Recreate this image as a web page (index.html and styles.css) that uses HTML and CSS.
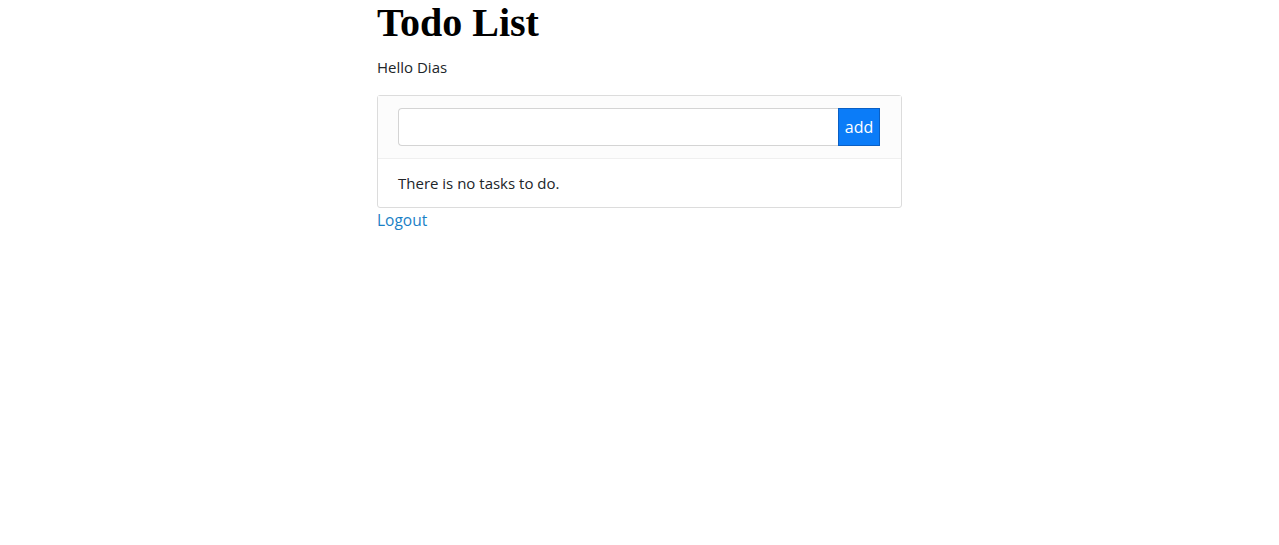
FILE: index.html
```html
<!DOCTYPE html>
<html>
<head>
    <title>Todo List</title>
    <link rel="stylesheet" href="styles.css">
</head>
<body>
    <div class="container">
        <h1>Todo List</h1>
        <p class="greeting">Hello Dias</p>
        <div class="card">
            <div class="card-header">
                <form class="add-form" onsubmit="return false">
                    <input type="text" class="task-input">
                    <button type="submit" class="add-btn">add</button>
                </form>
            </div>
            <div class="card-body">
                There is no tasks to do.
            </div>
        </div>
        <a href="#" class="logout">Logout</a>
    </div>
</body>
</html>
```

FILE: styles.css
```css
body {
    margin: 0;
    font-family: 'Open Sans', 'Noto Sans', sans-serif;
    font-size: 15px;
    line-height: 24px;
    color: #212529;
    background-color: #fff;
}

.container {
    width: 525px;
    margin: 0 auto;
}

h1 {
    margin: 0 0 9px;
    font-family: 'Liberation Serif', serif;
    font-size: 40px;
    line-height: 46px;
    font-weight: bold;
    color: #000;
}

.greeting {
    margin: 0 0 16px;
}

.card {
    border: 1px solid #dcdcdc;
    border-radius: 3px;
}

.card-header {
    padding: 12px 21px 12px 20px;
    background-color: #fcfcfc;
    border-bottom: 1px solid #efefef;
}

.add-form {
    display: flex;
}

.task-input {
    flex: 1;
    height: 38px;
    box-sizing: border-box;
    border: 1px solid #d4d4d4;
    border-right: none;
    border-radius: 4px 0 0 4px;
    background: #fff;
}

.add-btn {
    width: 42px;
    height: 38px;
    padding: 0;
    border: 1px solid #0a5fc4;
    background-color: #0b7cf8;
    color: #fff;
    font-family: 'Open Sans', 'Noto Sans', sans-serif;
    font-size: 16px;
}

.card-body {
    padding: 12px 20px;
}

.logout {
    color: #1a7fc6;
    text-decoration: none;
    font-size: 15.5px;
}
```
